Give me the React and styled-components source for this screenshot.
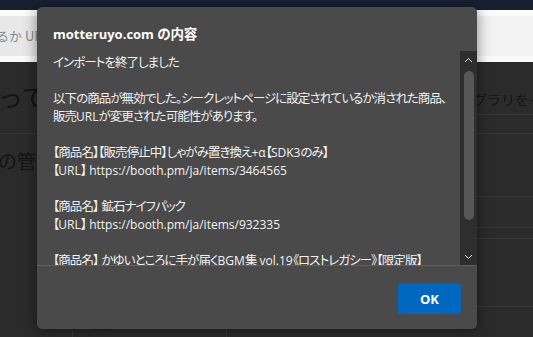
import React from 'react';
import styled, { createGlobalStyle } from 'styled-components';

const GlobalStyle = createGlobalStyle`
  html, body {
    margin: 0;
    padding: 0;
    background: #2b2b2b;
  }
  body {
    font-family: 'Open Sans', 'Noto Sans CJK JP', sans-serif;
  }
`

const Page = styled.div`
  position: relative;
  display: flex;
  flex-direction: column;

  width: 533px;
  height: 337px;
  overflow: hidden;

  background-color: #2b2b2b;
`

const TopBar = styled.div`
  height: 10px;
  background-color: #172030;
`

const SearchBand = styled.div`
  display: flex;
  align-items: center;

  height: 52px;
  padding: 0 0 6px 0;
  box-sizing: border-box;

  background-color: #fafafa;
`

const SearchInput = styled.div`
  display: flex;
  align-items: center;
  flex-grow: 1;

  height: 40px;
  margin-top: 5px;
  overflow: hidden;
  white-space: nowrap;

  background: linear-gradient(90deg, #e8e8e8 0%, #ececec 70%, #f4f4f4 100%);

  font-family: 'Noto Sans CJK JP', sans-serif;
  font-size: 13px;
  color: #8a8a8a;
`

const Placeholder = styled.span`
  margin-left: -4px;
`

const Main = styled.div`
  display: flex;
  flex-grow: 1;
`

const LeftColumn = styled.div`
  display: flex;
  flex-direction: column;

  width: 240px;
  overflow: hidden;
`

const PageHeading = styled.div`
  height: 72px;
  padding-top: 16px;
  box-sizing: border-box;
  border-bottom: 1px solid #363636;
  margin-left: -2px;

  font-family: 'Noto Sans CJK JP', sans-serif;
  font-size: 25px;
  line-height: 36px;
  white-space: nowrap;
  color: #121212;
`

const SectionHeading = styled.div`
  padding-top: 14px;
  margin-left: -2px;

  font-family: 'Noto Sans CJK JP', sans-serif;
  font-size: 19px;
  line-height: 26px;
  white-space: nowrap;
  color: #141414;
`

const LeftBottom = styled.div`
  display: flex;
  align-items: flex-end;
  flex-grow: 1;
  padding-left: 72px;
`

const SelectBox = styled.div`
  display: flex;
  align-items: center;
  justify-content: space-between;

  width: 155px;
  height: 30px;
  padding: 0 10px;
  border-left: 1px solid #383838;
  border-right: 1px solid #383838;
  box-sizing: border-box;

  font-family: 'Noto Sans CJK JP', sans-serif;
  font-size: 14px;
  color: #161616;
`

const Spacer = styled.div`
  flex-grow: 1;
`

const RightColumn = styled.div`
  display: flex;
  flex-direction: column;

  width: 60px;
  overflow: hidden;
`

const RightRow = styled.div`
  display: flex;
  align-items: flex-end;

  height: ${props => props.height}px;
  padding-bottom: ${props => props.pad || 0}px;
  border-bottom: 1px solid #383838;
  box-sizing: border-box;

  font-family: 'Noto Sans CJK JP', sans-serif;
  font-size: 14px;
  line-height: 20px;
  white-space: nowrap;
  color: #151515;
`

const Dialog = styled.div`
  position: absolute;
  left: 37px;
  top: 7px;

  display: flex;
  flex-direction: column;

  width: 440px;
  height: 322px;
  border-radius: 5px;
  overflow: hidden;

  background-color: #4a4a4a;
  box-shadow: 0 2px 14px rgba(0, 0, 0, 0.45);
`

const DialogTitle = styled.div`
  padding: 17px 16px 0 16px;

  font-family: 'Open Sans', 'Noto Sans CJK JP', sans-serif;
  font-weight: 700;
  font-size: 13px;
  line-height: 18px;
  white-space: pre;
  color: #ffffff;
`

const ScrollArea = styled.div`
  display: flex;

  height: 214px;
  margin-top: 8px;
`

const MessageBody = styled.div`
  flex-grow: 1;
  padding: 2px 0 0 16px;
  overflow: hidden;

  font-family: 'Open Sans', 'Noto Sans CJK JP', sans-serif;
  font-size: 12px;
  line-height: 18px;
  color: #f2f2f2;
`

const MessageLine = styled.div`
  height: 18px;
  white-space: pre;
`

const Jp = styled.span`
  font-family: 'Noto Sans CJK JP', sans-serif;
  font-feature-settings: 'palt';
  font-size: ${props => props.size || 12.5}px;
  letter-spacing: ${props => props.spacing ?? -0.95}px;
`

const Scrollbar = styled.div`
  display: flex;
  flex-direction: column;
  align-items: center;

  width: 17px;
  background-color: #2e2e2e;
`

const ScrollArrow = styled.div`
  display: flex;
  align-items: center;
  justify-content: center;

  width: 17px;
  height: 17px;
`

const ScrollThumb = styled.div`
  width: 10px;
  height: 149px;
  margin-top: 3px;
  border-radius: 5px;

  background-color: #575757;
`

const ScrollGap = styled.div`
  flex-grow: 1;
`

const Footer = styled.div`
  display: flex;
  justify-content: flex-end;
  align-items: flex-start;
  flex-grow: 1;

  padding: 17px 16px 0 0;
  border-top: 1px solid #5e5e5e;
`

const OkButton = styled.button`
  width: 63px;
  height: 31px;
  border: none;
  border-radius: 3px;

  background-color: #0067c0;

  font-family: 'Open Sans', sans-serif;
  font-weight: 700;
  font-size: 13px;
  color: #ffffff;
`

const Chevron = ({ up }) => (
  <svg width="9" height="6" viewBox="0 0 9 6">
    <path
      d={up ? 'M1 5 L4.5 1.5 L8 5' : 'M1 1 L4.5 4.5 L8 1'}
      fill="none"
      stroke="#e6e6e6"
      strokeWidth="1"
    />
  </svg>
)

// Japanese runs get the CJK font with proportional kana, latin stays in Open Sans
const Mixed = ({ text, size, spacing }) =>
  text.split(/([\u3000-\u30ff\u3400-\u9fff\uff00-\uffef]+)/).map((part, i) =>
    i % 2 === 1
      ? <Jp key={i} size={size} spacing={spacing}>{part}</Jp>
      : part
  )

const lines = [
  'インポートを終了しました',
  '',
  '以下の商品が無効でした。シークレットページに設定されているか消された商品、',
  '販売URLが変更された可能性があります。',
  '',
  '【商品名】【販売停止中】しゃがみ置き換え+α【SDK3のみ】',
  '【URL】 https://booth.pm/ja/items/3464565',
  '',
  '【商品名】 鉱石ナイフパック',
  '【URL】 https://booth.pm/ja/items/932335',
  '',
  '【商品名】 かゆいところに手が届くBGM集 vol.19《ロストレガシー》【限定版】',
  '【URL】 https://booth.pm/ja/items/4012345',
]

const App = () => {
  return (
    <>
      <GlobalStyle/>
      <Page>
        <TopBar/>
        <SearchBand>
          <SearchInput>
            <Placeholder>るか URLを入力してください</Placeholder>
          </SearchInput>
        </SearchBand>
        <Main>
          <LeftColumn>
            <PageHeading>って</PageHeading>
            <SectionHeading>の管理</SectionHeading>
            <LeftBottom>
              <SelectBox>
                <span>公開</span>
                <span>▾</span>
              </SelectBox>
            </LeftBottom>
          </LeftColumn>
          <Spacer/>
          <RightColumn>
            <RightRow height={53} pad={5}>グラリをイ</RightRow>
            <RightRow height={19}/>
            <RightRow height={63}/>
            <RightRow height={31}/>
            <RightRow height={11}/>
            <RightRow height={68}/>
          </RightColumn>
        </Main>

        <Dialog>
          <DialogTitle>
            <Mixed text="motteruyo.com の内容" size={13.5} spacing={-0.2}/>
          </DialogTitle>
          <ScrollArea>
            <MessageBody>
              {lines.map((line, i) => (
                <MessageLine key={i}><Mixed text={line}/></MessageLine>
              ))}
            </MessageBody>
            <Scrollbar>
              <ScrollArrow><Chevron up/></ScrollArrow>
              <ScrollThumb/>
              <ScrollGap/>
              <ScrollArrow><Chevron/></ScrollArrow>
            </Scrollbar>
          </ScrollArea>
          <Footer>
            <OkButton>OK</OkButton>
          </Footer>
        </Dialog>
      </Page>
    </>
  );
};

export default App;
